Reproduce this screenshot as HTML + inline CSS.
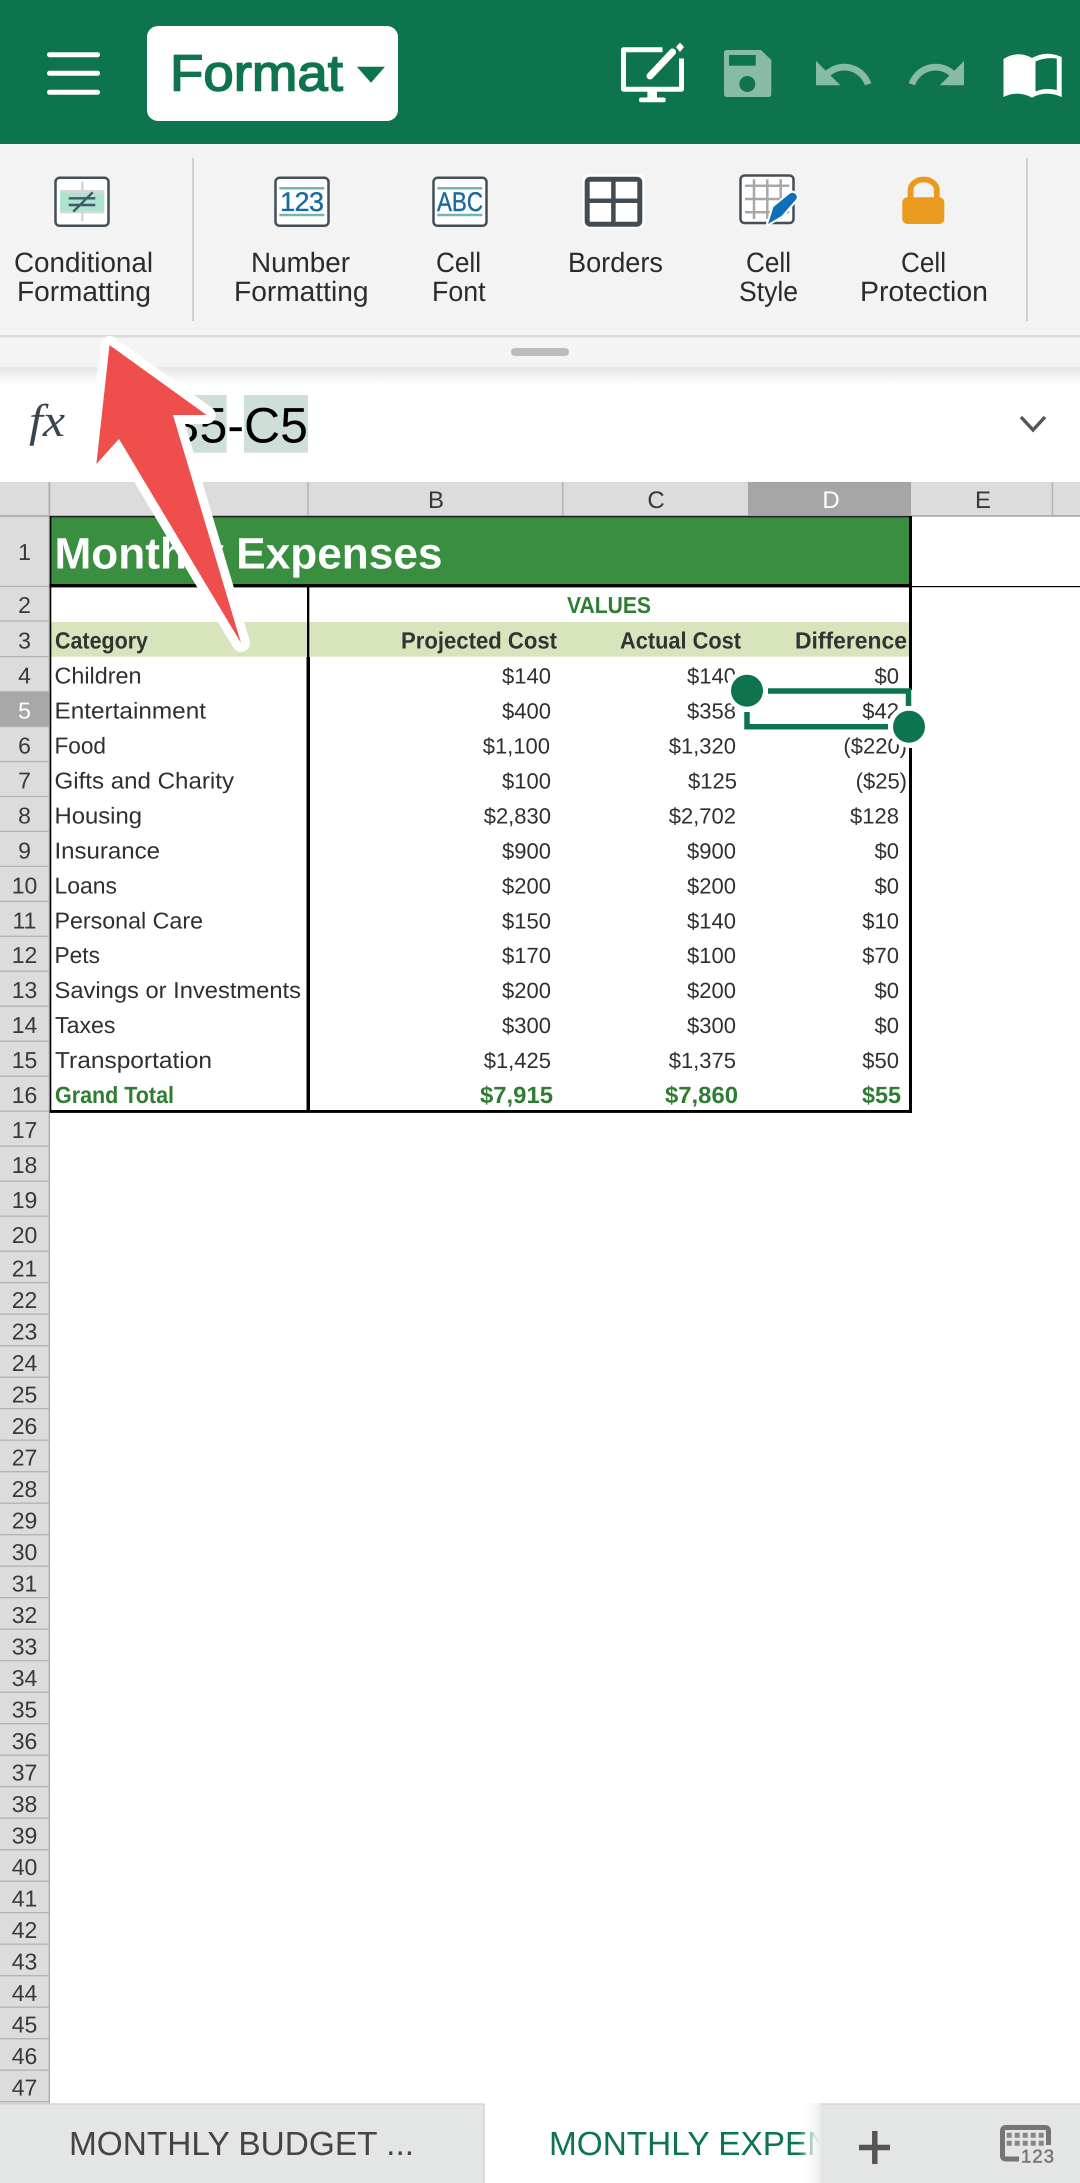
<!DOCTYPE html>
<html><head><meta charset="utf-8"><title>Format</title>
<style>
html,body{margin:0;padding:0;background:#fff;width:1080px;height:2183px;overflow:hidden}
svg{display:block;font-family:"Liberation Sans",sans-serif;text-rendering:geometricPrecision}
.t{font-size:28px;fill:#2b2b2b}
.rh{font-size:23px;fill:#383838;text-anchor:middle}
.ch{font-size:24px;fill:#383838;text-anchor:middle}
.l{font-size:23px;fill:#2f2f2f}
.v{font-size:22px;fill:#2f2f2f;text-anchor:end}
.b{font-size:23.5px;font-weight:bold;fill:#333}
.g{font-size:23.5px;font-weight:bold;fill:#2e7d32}
</style></head><body>
<svg width="1080" height="2183" viewBox="0 0 1080 2183" xmlns="http://www.w3.org/2000/svg">
<defs>
<linearGradient id="sh" x1="0" y1="0" x2="0" y2="1"><stop offset="0" stop-color="#e6e6e6"/><stop offset="1" stop-color="#fff"/></linearGradient>
<linearGradient id="fd" x1="0" y1="0" x2="1" y2="0"><stop offset="0" stop-color="#fff" stop-opacity="0"/><stop offset=".75" stop-color="#f4f5f4" stop-opacity=".9"/><stop offset="1" stop-color="#e9ebea"/></linearGradient>
<clipPath id="tc"><rect x="484" y="2104" width="337" height="79"/></clipPath>
</defs>
<rect width="1080" height="2183" fill="#fff"/>

<!-- top bar -->
<rect width="1080" height="144" fill="#0e744d"/>
<g stroke="#fff" stroke-width="5" stroke-linecap="round"><path d="M49.5 54.7H97.5M49.5 73.3H97.5M49.5 92.3H97.5"/></g>
<rect x="147" y="26" width="251" height="95" rx="11" fill="#fff"/>
<text x="170" y="90.5" font-size="51" fill="#0e744d" stroke="#0e744d" stroke-width="1.5" textLength="173" lengthAdjust="spacingAndGlyphs">Format</text>
<path d="M356.8 66.7H385L371 82.7Z" fill="#0e744d"/>

<!-- monitor edit -->
<path d="M660 49.8H623.5V89.2H681.5V61" fill="none" stroke="#fff" stroke-width="5" stroke-linejoin="round" stroke-linecap="square"/>
<rect x="647.4" y="91" width="9.6" height="8" fill="#fff"/>
<rect x="639" y="97.5" width="26.7" height="4.7" rx="2" fill="#fff"/>
<path d="M650 76L672.6 52" stroke="#fff" stroke-width="7" stroke-linecap="round" fill="none"/>
<path d="M680 42.5L684 47L680 52L676 47Z" fill="#fff"/>
<!-- save -->
<path d="M727 50H761L771.3 60V94Q771.3 97 768.3 97H727Q724 97 724 94V53Q724 50 727 50Z" fill="#87bba5"/>
<rect x="729" y="55" width="26.7" height="10.7" fill="#0e744d"/>
<circle cx="747.3" cy="84" r="8" fill="#0e744d"/>
<!-- undo/redo -->
<path transform="translate(810.6 42.1) scale(2.7)" fill="#87bba5" d="M12.5 8c-2.65 0-5.05.99-6.9 2.6L2 7v9h9l-3.62-3.62c1.39-1.16 3.16-1.88 5.12-1.88 3.54 0 6.55 2.31 7.6 5.5l2.37-.78C21.08 11.03 17.15 8 12.5 8z"/>
<path transform="translate(904.6 42.1) scale(2.7)" fill="#87bba5" d="M18.4 10.6C16.55 8.99 14.15 8 11.5 8c-4.65 0-8.58 3.03-9.96 7.22L3.9 16c1.05-3.19 4.05-5.5 7.6-5.5 1.95 0 3.73.72 5.12 1.88L13 16h9V7l-3.6 3.6z"/>
<!-- book -->
<path d="M1003.5 59Q1018 50 1032 58Q1046 50 1061.7 57V97Q1046 90 1032 97.7Q1018 90 1003.5 97Z" fill="#fff"/>
<path d="M1035.5 61.5Q1045 57 1056.8 58.5V90Q1045 87.5 1035.5 91.5Z" fill="#0e744d"/>

<!-- ribbon -->
<rect y="144" width="1080" height="191" fill="#f3f3f3"/>
<rect y="335" width="1080" height="2.5" fill="#dcdcdc"/>
<rect y="337.5" width="1080" height="29.5" fill="#f4f4f4"/>
<rect x="511" y="348" width="58" height="8" rx="4" fill="#bdbdbd"/>
<rect y="367" width="1080" height="18" fill="url(#sh)"/>
<rect x="192" y="158" width="2" height="163" fill="#cfcfcf"/>
<rect x="1026" y="158" width="2" height="163" fill="#cfcfcf"/>

<!-- conditional -->
<rect x="55.5" y="177.8" width="53" height="48" rx="4" fill="#fff" stroke="#434e56" stroke-width="2.5"/>
<rect x="81" y="181.7" width="2.6" height="39.3" fill="#d6d8d6"/>
<rect x="60" y="190" width="44.3" height="23.3" fill="#d6d8d6"/>
<rect x="60" y="192.7" width="44.3" height="18.3" fill="#aee3d2"/>
<path d="M68.7 198.3H95.3M68.7 205H95.3M73.3 211.7L92.7 192.3" stroke="#3f5a68" stroke-width="2.4" fill="none"/>
<!-- 123 -->
<rect x="275.5" y="177.8" width="53" height="48" rx="4" fill="#fff" stroke="#434e56" stroke-width="2.5"/>
<path d="M279.3 188.3H324.3M279.3 215H324.3" stroke="#72b7aa" stroke-width="2.5"/>
<text x="280" y="211" font-size="27" fill="#1a6aa0" stroke="#1a6aa0" stroke-width=".35" textLength="44" lengthAdjust="spacing">123</text>
<!-- ABC -->
<rect x="433.5" y="177.8" width="53" height="48" rx="4" fill="#fff" stroke="#434e56" stroke-width="2.5"/>
<path d="M437.3 188.3H482.3M437.3 215H482.3" stroke="#72b7aa" stroke-width="2.5"/>
<text x="437" y="211" font-size="27" fill="#1a6aa0" stroke="#1a6aa0" stroke-width=".45" textLength="46" lengthAdjust="spacingAndGlyphs">ABC</text>
<!-- borders -->
<rect x="582.7" y="174.3" width="62.3" height="54" rx="6" fill="#fff"/>
<rect x="587.2" y="179.2" width="52.6" height="45" rx="3" fill="#fff" stroke="#414c54" stroke-width="5"/>
<path d="M613.4 179V224M587 200.7H640" stroke="#414c54" stroke-width="4.5"/>
<!-- cell style -->
<rect x="740.5" y="175.5" width="53" height="47.5" rx="4" fill="#fff" stroke="#434e56" stroke-width="2.5"/>
<path d="M754 179.3V219M767.3 179.3V219M780.7 179.3V219M745 185.7H789.3M745 199H789.3M745 212.3H789.3" stroke="#a8a8a8" stroke-width="2.5" fill="none"/>
<path d="M768 224L773.5 207L790 193.5Q793 191.5 796 194.5Q798 197.5 795.5 200L781.5 216Z" fill="#0f6fb7" stroke="#fff" stroke-width="4" stroke-linejoin="round" paint-order="stroke"/>
<!-- lock -->
<path d="M910.6 199V190A13.1 10.5 0 0 1 936.8 190V199" fill="none" stroke="#e99b20" stroke-width="5.8"/>
<rect x="902.3" y="197.3" width="42" height="26.7" rx="5" fill="#e99b20"/>

<!-- ribbon text -->
<text class="t" x="14" y="272" textLength="139" lengthAdjust="spacingAndGlyphs">Conditional</text>
<text class="t" x="17" y="301" textLength="134" lengthAdjust="spacingAndGlyphs">Formatting</text>
<text class="t" x="251" y="272" textLength="99" lengthAdjust="spacingAndGlyphs">Number</text>
<text class="t" x="234" y="301" textLength="134.5" lengthAdjust="spacingAndGlyphs">Formatting</text>
<text class="t" x="436" y="272" textLength="45" lengthAdjust="spacingAndGlyphs">Cell</text>
<text class="t" x="432" y="301" textLength="53.5" lengthAdjust="spacingAndGlyphs">Font</text>
<text class="t" x="568" y="272" textLength="95" lengthAdjust="spacingAndGlyphs">Borders</text>
<text class="t" x="746" y="272" textLength="45" lengthAdjust="spacingAndGlyphs">Cell</text>
<text class="t" x="739" y="301" textLength="59" lengthAdjust="spacingAndGlyphs">Style</text>
<text class="t" x="901" y="272" textLength="45" lengthAdjust="spacingAndGlyphs">Cell</text>
<text class="t" x="860" y="301" textLength="128" lengthAdjust="spacingAndGlyphs">Protection</text>

<!-- formula bar -->
<text x="29" y="436" font-family="'Liberation Serif',serif" font-style="italic" font-size="46" fill="#37474f" textLength="36" lengthAdjust="spacingAndGlyphs">fx</text>
<rect x="166" y="395" width="60.6" height="57.7" fill="#cedfd8"/>
<rect x="244" y="395" width="64" height="57.7" fill="#cedfd8"/>
<text x="137" y="442.7" font-size="50" fill="#000">=B5-C5</text>
<path d="M1021 417L1033 430L1045 417" fill="none" stroke="#555" stroke-width="3.4"/>

<!-- column header -->
<rect y="482" width="1080" height="34" fill="#dcdcdc"/>
<rect x="748" y="482" width="163" height="34" fill="#a6a6a6"/>
<path d="M49.5 482V516M308 482V516M562.7 482V516M1052.4 482V516" stroke="#b4b4b4" stroke-width="1.5"/>
<rect y="515.3" width="1080" height="1.4" fill="#9c9c9c"/>
<text class="ch" x="436" y="508">B</text>
<text class="ch" x="656" y="508">C</text>
<text class="ch" x="831" y="508" style="fill:#fff">D</text>
<text class="ch" x="983" y="508">E</text>

<!-- row header -->
<rect y="516" width="49" height="1588" fill="#dcdcdc"/>
<rect y="692" width="49" height="35" fill="#a8a8a8"/>
<rect x="48.7" y="482" width="1.3" height="1622" fill="#aaa"/>
<path fill="none" stroke="#b4b4b4" stroke-width="1.3" d="M0 516.5H49M0 586.5H49M0 621H49M0 656.7H49M0 691.6H49M0 726.6H49M0 761.5H49M0 796.5H49M0 831.4H49M0 866.4H49M0 901.3H49M0 936.3H49M0 971.2H49M0 1006.2H49M0 1041.2H49M0 1076.2H49M0 1111.2H49M0 1146.2H49M0 1181.2H49M0 1216.2H49M0 1251.2H49M0 1282.7H49M0 1314.2H49M0 1345.7H49M0 1377.2H49M0 1408.7H49M0 1440.2H49M0 1471.7H49M0 1503.2H49M0 1534.7H49M0 1566.2H49M0 1597.7H49M0 1629.2H49M0 1660.7H49M0 1692.2H49M0 1723.7H49M0 1755.2H49M0 1786.7H49M0 1818.2H49M0 1849.7H49M0 1881.2H49M0 1912.7H49M0 1944.2H49M0 1975.7H49M0 2007.2H49M0 2038.7H49M0 2070.2H49M0 2101.7H49"/>
<g>
<text class="rh" x="24.5" y="560">1</text>
<text class="rh" x="24.5" y="613">2</text>
<text class="rh" x="24.5" y="648.7">3</text>
<text class="rh" x="24.5" y="683.6">4</text>
<text class="rh" x="24.5" y="718.6" style="fill:#fff">5</text>
<text class="rh" x="24.5" y="753.5">6</text>
<text class="rh" x="24.5" y="788.5">7</text>
<text class="rh" x="24.5" y="823.4">8</text>
<text class="rh" x="24.5" y="858.4">9</text>
<text class="rh" x="24.5" y="893.3">10</text>
<text class="rh" x="24.5" y="928.3">11</text>
<text class="rh" x="24.5" y="963.2">12</text>
<text class="rh" x="24.5" y="998.2">13</text>
<text class="rh" x="24.5" y="1033.2">14</text>
<text class="rh" x="24.5" y="1068.2">15</text>
<text class="rh" x="24.5" y="1103.2">16</text>
<text class="rh" x="24.5" y="1138.2">17</text>
<text class="rh" x="24.5" y="1173.2">18</text>
<text class="rh" x="24.5" y="1208.2">19</text>
<text class="rh" x="24.5" y="1243.2">20</text>
<text class="rh" x="24.5" y="1276.7">21</text>
<text class="rh" x="24.5" y="1308.2">22</text>
<text class="rh" x="24.5" y="1339.7">23</text>
<text class="rh" x="24.5" y="1371.2">24</text>
<text class="rh" x="24.5" y="1402.7">25</text>
<text class="rh" x="24.5" y="1434.2">26</text>
<text class="rh" x="24.5" y="1465.7">27</text>
<text class="rh" x="24.5" y="1497.2">28</text>
<text class="rh" x="24.5" y="1528.7">29</text>
<text class="rh" x="24.5" y="1560.2">30</text>
<text class="rh" x="24.5" y="1591.7">31</text>
<text class="rh" x="24.5" y="1623.2">32</text>
<text class="rh" x="24.5" y="1654.7">33</text>
<text class="rh" x="24.5" y="1686.2">34</text>
<text class="rh" x="24.5" y="1717.7">35</text>
<text class="rh" x="24.5" y="1749.2">36</text>
<text class="rh" x="24.5" y="1780.7">37</text>
<text class="rh" x="24.5" y="1812.2">38</text>
<text class="rh" x="24.5" y="1843.7">39</text>
<text class="rh" x="24.5" y="1875.2">40</text>
<text class="rh" x="24.5" y="1906.7">41</text>
<text class="rh" x="24.5" y="1938.2">42</text>
<text class="rh" x="24.5" y="1969.7">43</text>
<text class="rh" x="24.5" y="2001.2">44</text>
<text class="rh" x="24.5" y="2032.7">45</text>
<text class="rh" x="24.5" y="2064.2">46</text>
<text class="rh" x="24.5" y="2095.7">47</text>
</g>

<!-- sheet content -->
<rect x="50" y="516.5" width="861" height="69" fill="#3a8e3f"/>
<text x="54.5" y="568.5" font-size="44" font-weight="bold" fill="#fff" textLength="388" lengthAdjust="spacingAndGlyphs">Monthly Expenses</text>
<rect x="51" y="622" width="858" height="34.7" fill="#d8e4bc"/>
<text x="567" y="613" font-size="23" font-weight="bold" fill="#2e7d32" textLength="84" lengthAdjust="spacingAndGlyphs">VALUES</text>
<text class="b" x="55" y="648.7" textLength="93" lengthAdjust="spacingAndGlyphs">Category</text>
<text class="b" x="401" y="648.7" textLength="156" lengthAdjust="spacingAndGlyphs">Projected Cost</text>
<text class="b" x="620" y="648.7" textLength="121" lengthAdjust="spacingAndGlyphs">Actual Cost</text>
<text class="b" x="795" y="648.7" textLength="112" lengthAdjust="spacingAndGlyphs">Difference</text>

<g>
<text class="l" x="54.5" y="683.6" textLength="87" lengthAdjust="spacingAndGlyphs">Children</text>
<text class="v" x="551" y="683.6">$140</text><text class="v" x="736" y="683.6">$140</text><text class="v" x="899" y="683.6">$0</text>

<text class="l" x="54.5" y="718.6" textLength="151.5" lengthAdjust="spacingAndGlyphs">Entertainment</text>
<text class="v" x="551" y="718.6">$400</text><text class="v" x="736" y="718.6">$358</text><text class="v" x="899" y="718.6">$42</text>

<text class="l" x="54.5" y="753.5" textLength="51.5" lengthAdjust="spacingAndGlyphs">Food</text>
<text class="v" x="550" y="753.5">$1,100</text><text class="v" x="736" y="753.5">$1,320</text><text class="v" x="907" y="753.5">($220)</text>

<text class="l" x="54.5" y="788.5" textLength="179.5" lengthAdjust="spacingAndGlyphs">Gifts and Charity</text>
<text class="v" x="551" y="788.5">$100</text><text class="v" x="737" y="788.5">$125</text><text class="v" x="907" y="788.5">($25)</text>

<text class="l" x="54.5" y="823.4" textLength="87.5" lengthAdjust="spacingAndGlyphs">Housing</text>
<text class="v" x="551" y="823.4">$2,830</text><text class="v" x="736" y="823.4">$2,702</text><text class="v" x="899" y="823.4">$128</text>

<text class="l" x="54.5" y="858.4" textLength="105.5" lengthAdjust="spacingAndGlyphs">Insurance</text>
<text class="v" x="551" y="858.4">$900</text><text class="v" x="736" y="858.4">$900</text><text class="v" x="899" y="858.4">$0</text>

<text class="l" x="54.5" y="893.3" textLength="62.5" lengthAdjust="spacingAndGlyphs">Loans</text>
<text class="v" x="551" y="893.3">$200</text><text class="v" x="736" y="893.3">$200</text><text class="v" x="899" y="893.3">$0</text>

<text class="l" x="54.5" y="928.3" textLength="148.5" lengthAdjust="spacingAndGlyphs">Personal Care</text>
<text class="v" x="551" y="928.3">$150</text><text class="v" x="736" y="928.3">$140</text><text class="v" x="899" y="928.3">$10</text>

<text class="l" x="54.5" y="963.2" textLength="45.5" lengthAdjust="spacingAndGlyphs">Pets</text>
<text class="v" x="551" y="963.2">$170</text><text class="v" x="736" y="963.2">$100</text><text class="v" x="899" y="963.2">$70</text>

<text class="l" x="54.5" y="998.2" textLength="246.5" lengthAdjust="spacingAndGlyphs">Savings or Investments</text>
<text class="v" x="551" y="998.2">$200</text><text class="v" x="736" y="998.2">$200</text><text class="v" x="899" y="998.2">$0</text>

<text class="l" x="55" y="1033.2" textLength="60.5" lengthAdjust="spacingAndGlyphs">Taxes</text>
<text class="v" x="551" y="1033.2">$300</text><text class="v" x="736" y="1033.2">$300</text><text class="v" x="899" y="1033.2">$0</text>

<text class="l" x="55" y="1068.2" textLength="157" lengthAdjust="spacingAndGlyphs">Transportation</text>
<text class="v" x="551" y="1068.2">$1,425</text><text class="v" x="736" y="1068.2">$1,375</text><text class="v" x="899" y="1068.2">$50</text>

<text class="g" x="55" y="1103.2" textLength="119" lengthAdjust="spacingAndGlyphs">Grand Total</text>
<text class="g" x="480" y="1103.2" textLength="73" lengthAdjust="spacingAndGlyphs">$7,915</text>
<text class="g" x="665" y="1103.2" textLength="73" lengthAdjust="spacingAndGlyphs">$7,860</text>
<text class="g" x="862" y="1103.2" textLength="39" lengthAdjust="spacingAndGlyphs">$55</text>
</g>

<!-- borders -->
<rect x="49.6" y="516" width="862" height="1.4" fill="#222"/>
<rect x="49.6" y="584" width="862.4" height="3.4" fill="#000"/>
<rect x="912" y="586" width="168" height="1.2" fill="#000"/>
<rect x="49.8" y="516" width="1.5" height="596.5" fill="#000"/>
<rect x="307" y="586" width="2.3" height="71" fill="#000"/>
<rect x="306.5" y="657" width="3.5" height="455" fill="#000"/>
<rect x="49.6" y="1110" width="862.4" height="2.9" fill="#000"/>
<rect x="909" y="516" width="3" height="174" fill="#000"/>
<rect x="909" y="748" width="3" height="365" fill="#000"/>

<!-- selection -->
<circle cx="747" cy="690.7" r="21" fill="#fff"/>
<circle cx="909" cy="726.7" r="21" fill="#fff"/>
<path d="M768 691H908.5V706M747 712V726.7H888" fill="none" stroke="#0e744d" stroke-width="5.5"/>
<circle cx="747" cy="690.7" r="16" fill="#0e744d"/>
<circle cx="909" cy="726.7" r="16" fill="#0e744d"/>

<!-- arrow -->
<path d="M109.5 345L206.6 415H173L241 643L119 439L96.4 464Z" fill="#ee4f4d" stroke="#fff" stroke-width="18" stroke-linejoin="round" paint-order="stroke"/>

<!-- tabs -->
<rect y="2104" width="1080" height="79" fill="#e4e6e5"/>
<rect y="2103.3" width="1080" height="1.3" fill="#cfd1d0"/>
<rect x="484" y="2103" width="337" height="80" fill="#fff"/>
<rect x="483.5" y="2104" width="1.3" height="79" fill="#d0d2d1"/>
<text x="69" y="2155" font-size="33.5" fill="#444" textLength="345" lengthAdjust="spacingAndGlyphs">MONTHLY BUDGET ...</text>
<g clip-path="url(#tc)"><text x="549" y="2155" font-size="33.5" fill="#0e744d" textLength="349" lengthAdjust="spacingAndGlyphs">MONTHLY EXPENSES</text></g>
<rect x="798" y="2103" width="23" height="80" fill="url(#fd)"/>
<path d="M859 2147.5H890M874.8 2131V2164" stroke="#555" stroke-width="5.5"/>
<!-- keyboard -->
<path d="M1048.500 2145V2131Q1048.500 2127.500 1045 2127.500H1006Q1002.500 2127.500 1002.500 2131V2155.500Q1002.500 2159 1006 2159H1019" fill="none" stroke="#757575" stroke-width="5"/>
<path fill="#858585" d="M1006.700 2132.700h5v5h-5zM1014.700 2132.700h5v5h-5zM1022.700 2132.700h5v5h-5zM1030.700 2132.700h5v5h-5zM1038.700 2132.700h5v5h-5zM1006.700 2140.700h5v5h-5zM1014.700 2140.700h5v5h-5zM1022.700 2140.700h5v5h-5zM1030.700 2140.700h5v5h-5zM1038.700 2140.700h5v5h-5z"/>
<text x="1021" y="2162.700" font-size="18.500" fill="#757575" stroke="#757575" stroke-width=".5" textLength="33" lengthAdjust="spacing">123</text>
</svg>
</body></html>
